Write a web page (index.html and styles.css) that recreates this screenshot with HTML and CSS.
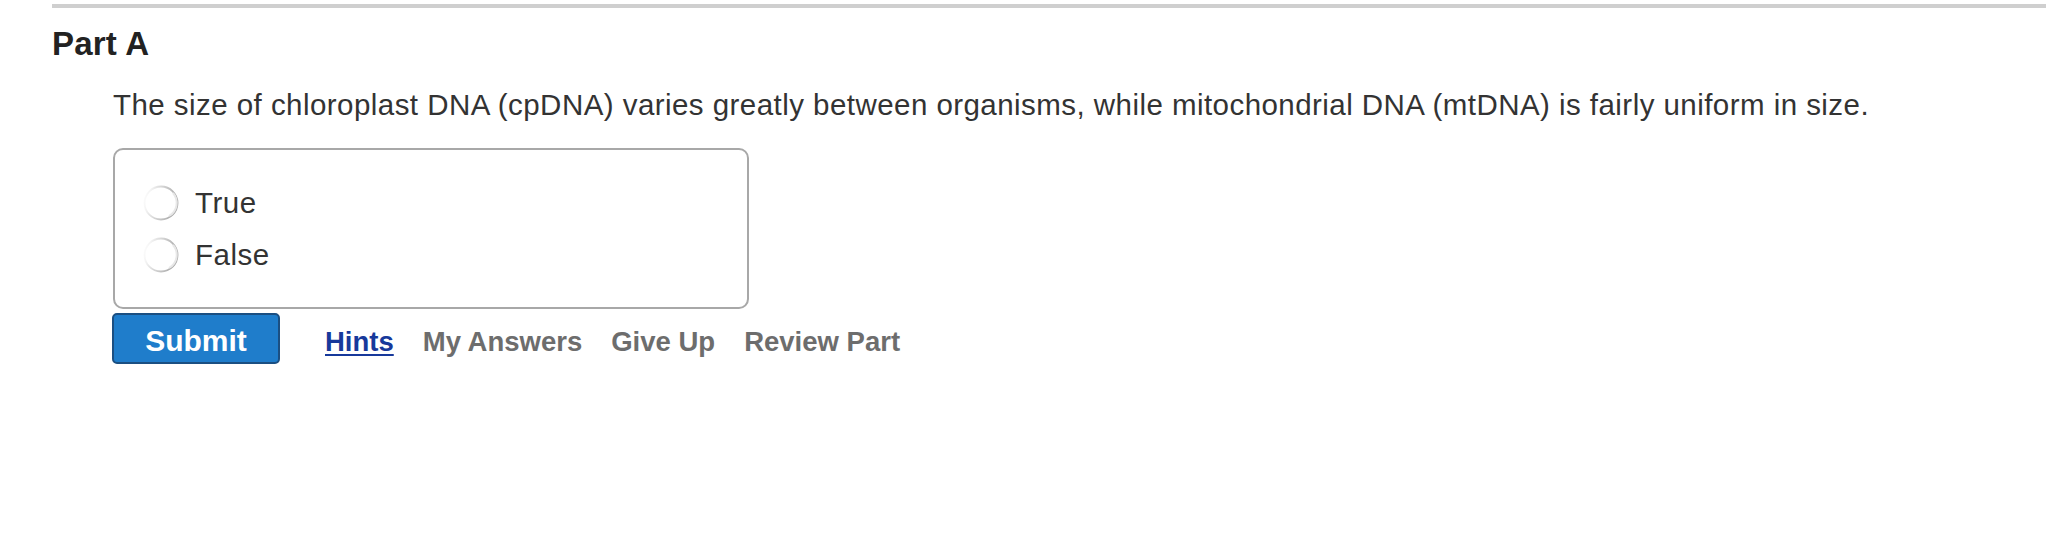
FILE: index.html
```html
<!DOCTYPE html>
<html lang="en">
<head>
<meta charset="utf-8">
<title>Part A</title>
<link rel="stylesheet" href="styles.css">
</head>
<body>
<div class="rule"></div>
<h2 class="part-title">Part A</h2>
<div class="part-body">
  <p class="question">The size of chloroplast DNA (cpDNA) varies greatly between organisms, while mitochondrial DNA (mtDNA) is fairly uniform in size.</p>
  <div class="answer-box">
    <label class="option">
      <span class="radio"><svg width="36" height="36" viewBox="0 0 36 36"><defs><linearGradient id="rg1" x1="0" y1="0" x2="1" y2="0.25"><stop offset="0" stop-color="#ffffff"/><stop offset="0.2" stop-color="#f4f4f4"/><stop offset="0.45" stop-color="#dadada"/><stop offset="1" stop-color="#a9a9a9"/></linearGradient></defs><circle cx="18" cy="18" r="16.5" fill="none" stroke="url(#rg1)" stroke-width="1.8"/><path d="M30 8 A15 15 0 0 1 26 31" fill="none" stroke="#e8e8e8" stroke-width="2"/></svg></span>
      <span class="option-text">True</span>
    </label>
    <label class="option">
      <span class="radio"><svg width="36" height="36" viewBox="0 0 36 36"><defs><linearGradient id="rg2" x1="0" y1="0" x2="1" y2="0.25"><stop offset="0" stop-color="#ffffff"/><stop offset="0.2" stop-color="#f4f4f4"/><stop offset="0.45" stop-color="#dadada"/><stop offset="1" stop-color="#a9a9a9"/></linearGradient></defs><circle cx="18" cy="18" r="16.5" fill="none" stroke="url(#rg2)" stroke-width="1.8"/><path d="M30 8 A15 15 0 0 1 26 31" fill="none" stroke="#e8e8e8" stroke-width="2"/></svg></span>
      <span class="option-text">False</span>
    </label>
  </div>
  <div class="actions">
    <button class="submit" type="button">Submit</button>
    <nav class="links">
      <a class="link link-hints" href="#">Hints</a>
      <span class="link">My Answers</span>
      <span class="link">Give Up</span>
      <span class="link">Review Part</span>
    </nav>
  </div>
</div>
</body>
</html>
```
FILE: styles.css
```css
html, body {
  margin: 0;
  padding: 0;
  background: #ffffff;
}

body {
  font-family: "Liberation Sans", Arial, Helvetica, sans-serif;
  color: #333333;
  padding-top: 4px;
}

.rule {
  margin-left: 52px;
  height: 4px;
  background: #cfcfcf;
}

.part-title {
  margin: 18px 0 0 52px;
  font-size: 33px;
  letter-spacing: 0.2px;
  line-height: 36px;
  font-weight: bold;
  color: #222222;
}

.part-body {
  margin-left: 113px;
}

.question {
  margin: 27px 0 0 0;
  font-size: 29.5px;
  letter-spacing: 0.45px;
  line-height: 32px;
  color: #333333;
}

.answer-box {
  box-sizing: border-box;
  width: 636px;
  height: 161px;
  margin-top: 27px;
  border: 2px solid #a8a8a8;
  border-radius: 10px;
  padding: 27px 0 0 28px;
}

.option {
  display: flex;
  align-items: center;
  height: 52px;
  font-size: 29.5px;
  letter-spacing: 0.5px;
  color: #333333;
}

.radio {
  width: 36px;
  height: 36px;
  display: block;
  flex: none;
}

.radio svg {
  display: block;
}

.option-text {
  margin-left: 16px;
  line-height: 52px;
}

.actions {
  display: flex;
  align-items: baseline;
  margin-top: 4px;
  margin-left: -1px;
}

.submit {
  box-sizing: border-box;
  width: 168px;
  height: 51px;
  padding: 4px 0 0 0;
  border: 2px solid #1b4f82;
  border-radius: 5px;
  background: #1f7dcb;
  color: #ffffff;
  font-family: "Liberation Sans", Arial, Helvetica, sans-serif;
  font-size: 30px;
  font-weight: bold;
  line-height: 43px;
  text-align: center;
  vertical-align: baseline;
}

.links {
  display: flex;
  align-items: baseline;
  gap: 29px;
  margin-left: 45px;
}

.link {
  font-size: 27.5px;
  font-weight: bold;
  color: #6d6d6d;
  text-decoration: none;
}

.link-hints {
  color: #17399b;
  text-decoration: underline;
  text-decoration-thickness: 2px;
  text-underline-offset: 3px;
}
```
